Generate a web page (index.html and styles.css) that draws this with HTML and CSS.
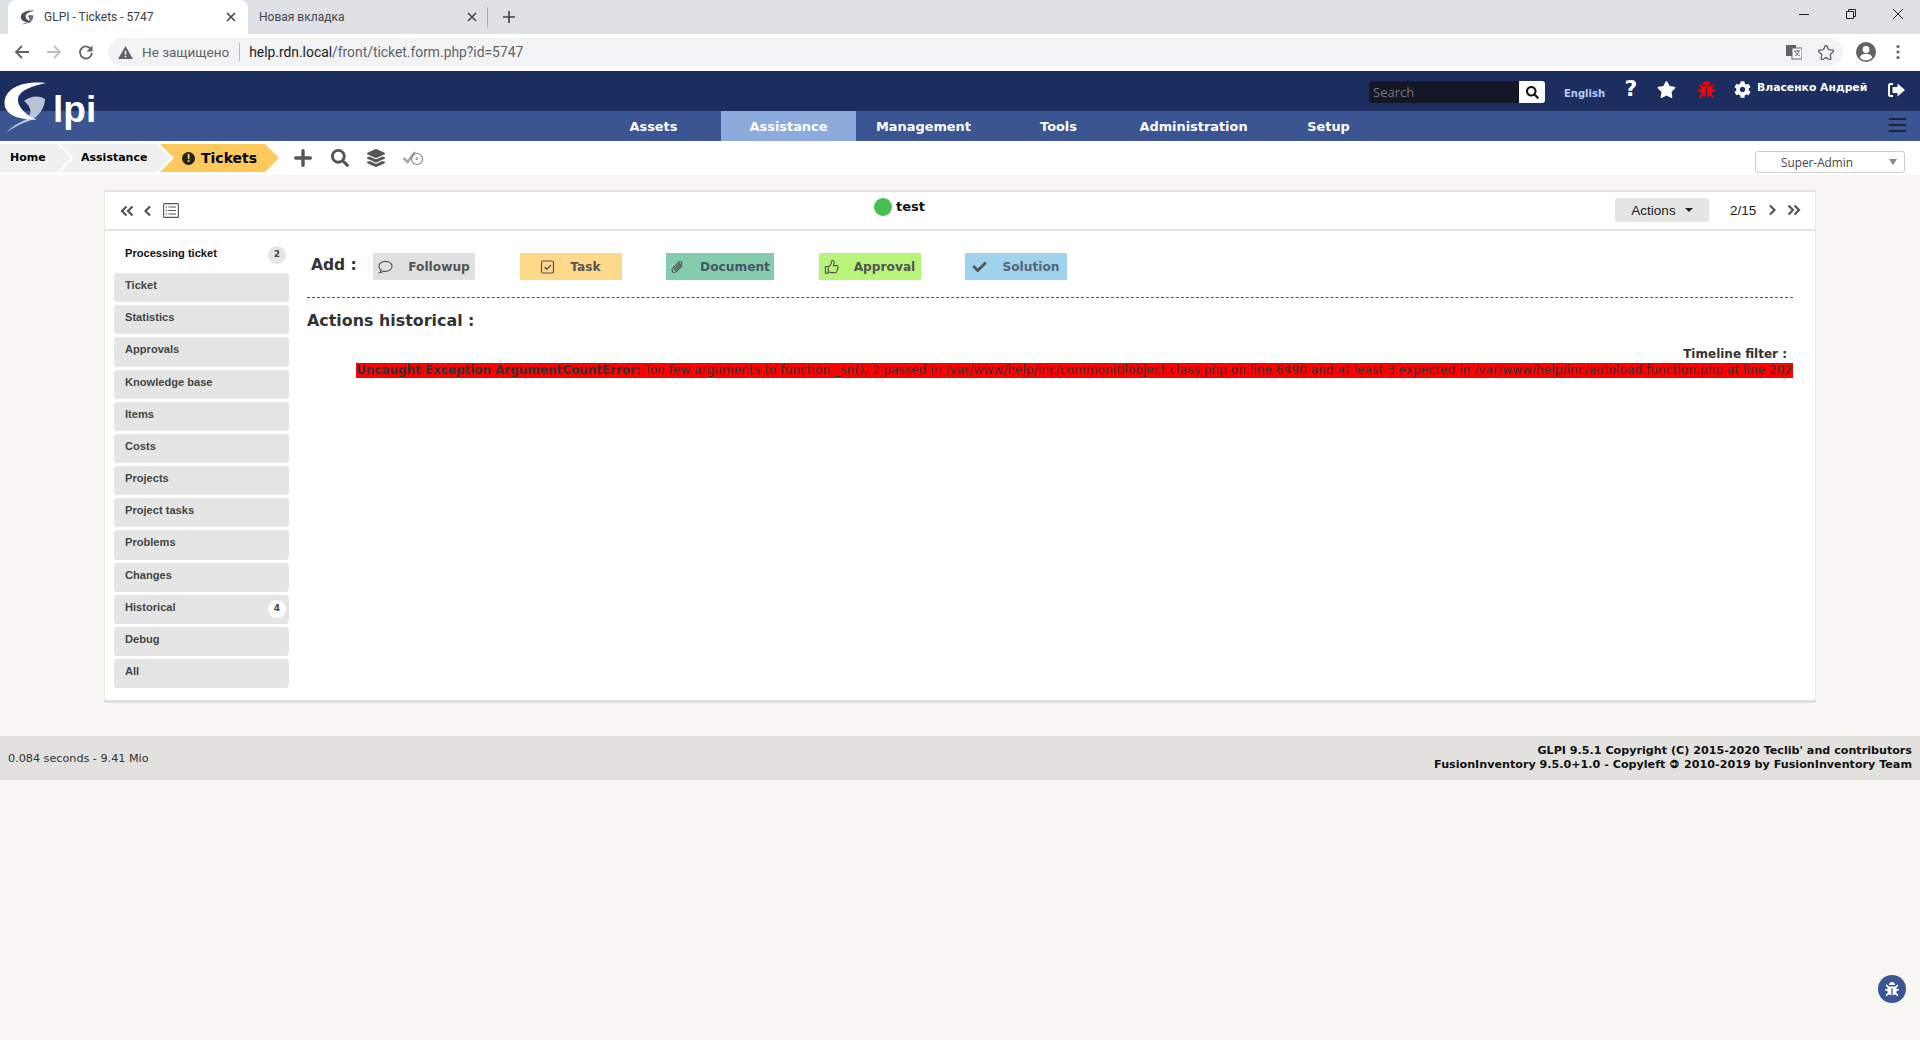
FILE: index.html
```html
<!DOCTYPE html>
<html lang="en">
<head>
<meta charset="utf-8">
<title>GLPI - Tickets - 5747</title>
<link rel="stylesheet" href="styles.css">
</head>
<body>
<svg class="defs" width="0" height="0" aria-hidden="true">
  <symbol id="i-search" viewBox="0 0 512 512"><path d="M505 442.7L405.3 343c-4.5-4.5-10.6-7-17-7H372c27.6-35.3 44-79.7 44-128C416 93.1 322.9 0 208 0S0 93.1 0 208s93.1 208 208 208c48.3 0 92.7-16.4 128-44v16.3c0 6.4 2.5 12.5 7 17l99.7 99.7c9.4 9.4 24.6 9.4 33.9 0l28.3-28.3c9.4-9.4 9.4-24.6.1-34zM208 336c-70.7 0-128-57.2-128-128 0-70.7 57.2-128 128-128 70.7 0 128 57.2 128 128 0 70.7-57.2 128-128 128z"/></symbol>
  <symbol id="i-bug" viewBox="0 0 512 512"><path d="M511.988 288.9c-.478 17.43-15.217 31.1-32.653 31.1H424v16c0 21.864-4.882 42.584-13.6 61.145l60.228 60.228c12.496 12.497 12.496 32.758 0 45.255-12.498 12.497-32.759 12.496-45.256 0l-54.736-54.736C345.886 467.965 314.351 480 280 480V236c0-6.627-5.373-12-12-12h-24c-6.627 0-12 5.373-12 12v244c-34.351 0-65.886-12.035-90.636-32.108l-54.736 54.736c-12.498 12.497-32.759 12.496-45.256 0-12.496-12.497-12.496-32.758 0-45.255l60.228-60.228C92.882 378.584 88 357.864 88 336v-16H32.666C15.23 320 .491 306.33.013 288.897-.484 270.806 14.038 256 32 256h56v-58.745l-46.628-46.628c-12.496-12.497-12.496-32.758 0-45.255 12.498-12.497 32.758-12.497 45.256 0L141.255 160h229.489l54.627-54.627c12.498-12.497 32.758-12.497 45.256 0 12.496 12.497 12.496 32.758 0 45.255L424 197.255V256h56c17.962 0 32.484 14.806 31.988 32.9zM257 0c-61.856 0-112 50.144-112 112h224C369 50.144 318.856 0 257 0z"/></symbol>
</svg>

<div class="tabstrip">
  <div class="tab tab-active">
    <svg class="favicon" viewBox="0 0 48 48"><path d="M46 2C28 0 8 4 3 18C0 30 10 37 24 39L38 40C28 35 17 28 18 18C20 10 32 5 46 2Z"/><path d="M24 19C30 15 38 15 43 18C43 28 37 38 28 41C19 44 10 46 5 47C12 42 20 40 27 38C32 33 32 26 24 19Z" opacity=".8"/></svg>
    <span class="tab-title">GLPI - Tickets - 5747</span>
    <svg class="tab-x" viewBox="0 0 10 10"><path d="M1 1l8 8M9 1l-8 8"/></svg>
  </div>
  <div class="tab">
    <span class="tab-title">Новая вкладка</span>
    <svg class="tab-x" viewBox="0 0 10 10"><path d="M1 1l8 8M9 1l-8 8"/></svg>
  </div>
  <span class="tab-sep"></span>
  <svg class="new-tab" viewBox="0 0 12 12"><path d="M6 0v12M0 6h12"/></svg>
  <div class="win-ctrls">
    <svg class="win-ico" viewBox="0 0 12 12"><path d="M1 6.5h10"/></svg>
    <svg class="win-ico" viewBox="0 0 12 12"><path d="M1.5 3.5h7v7h-7zM3.5 3.5v-2h7v7h-2"/></svg>
    <svg class="win-ico" viewBox="0 0 12 12"><path d="M1 1l10 10M11 1L1 11"/></svg>
  </div>
</div>

<div class="toolbar">
  <svg class="tb-ico" viewBox="0 0 16 16"><path d="M15 8H2M8 2L2 8l6 6"/></svg>
  <svg class="tb-ico tb-off" viewBox="0 0 16 16"><path d="M1 8h13M8 2l6 6-6 6"/></svg>
  <svg class="tb-ico" viewBox="0 0 16 16"><path d="M13.5 6A6 6 0 1 0 14 9"/><path class="tb-fill" d="M14.5 1.5v6h-6z"/></svg>
  <div class="omnibox">
    <svg class="warn" viewBox="0 0 16 14"><path d="M8 0l8 14H0z"/><path class="warn-mark" d="M7.2 5h1.6v4.5H7.2zM7.2 10.5h1.6v1.6H7.2z"/></svg>
    <span class="insecure">Не защищено</span>
    <span class="omni-sep"></span>
    <span class="url"><b>help.rdn.local</b>/front/ticket.form.php?id=5747</span>
    <svg class="translate" viewBox="0 0 16 16"><rect x="0" y="1" width="10" height="11" fill="#5f6368"/><rect x="6" y="4" width="10" height="11" fill="#fff" stroke="#5f6368"/><path d="M8 7h6M11 6v1M13 7c-1 3-2 4-4 5M9 8c1 2 3 3 5 4" fill="none" stroke="#5f6368"/></svg>
    <svg class="omni-star" viewBox="0 0 576 512"><path d="M259.3 17.8L194 150.2 47.9 171.5c-26.2 3.8-36.7 36.1-17.7 54.6l105.7 103-25 145.5c-4.5 26.3 23.2 46 46.4 33.7L288 439.6l130.7 68.7c23.2 12.2 50.9-7.4 46.4-33.7l-25-145.5 105.7-103c19-18.5 8.5-50.8-17.7-54.6L382 150.2 316.7 17.8c-11.7-23.6-45.6-23.9-57.4 0z"/></svg>
  </div>
  <svg class="avatar" viewBox="0 0 20 20"><circle cx="10" cy="10" r="10" fill="#5f6368"/><circle cx="10" cy="7.5" r="3.4" fill="#fff"/><path d="M3.6 15.2c1.5-2.5 4-3.4 6.4-3.4s4.900.9 6.400 3.400A8.200 8.200 0 0 1 3.600 15.200z" fill="#fff"/></svg>
  <svg class="kebab" viewBox="0 0 4 16"><circle cx="2" cy="2.500" r="1.600"/><circle cx="2" cy="8" r="1.600"/><circle cx="2" cy="13.500" r="1.600"/></svg>
</div>

<header class="hdr">
  <div class="logo">
    <svg class="logo-svg" viewBox="0 0 100 70">
      <path class="logo-s" d="M24 31C30 26 39 25 45 29C45 38 38 48 29 51C20 54 11 59 6 63C12 56 20 52 27 49C32 44 32 37 24 31Z"/>
      <path class="logo-g" d="M46 13C28 11 9 15 5 29C2 41 12 47 25 49L37 50C28 46 17 38 18 28C20 20 32 16 46 13Z"/>
      <text class="logo-t" x="53" y="52">lpi</text>
    </svg>
  </div>
  <div class="hdr-top">
    <div class="search"><span class="search-ph">Search</span><span class="search-btn"><svg class="search-ico" viewBox="0 0 512 512"><use href="#i-search"/></svg></span></div>
    <span class="lang">English</span>
    <span class="help">?</span>
    <svg class="h-star" viewBox="0 0 576 512"><path d="M259.3 17.8L194 150.2 47.900 171.500c-26.200 3.800-36.700 36.100-17.700 54.600l105.700 103-25 145.500c-4.500 26.300 23.200 46 46.400 33.700L288 439.600l130.700 68.700c23.200 12.200 50.900-7.400 46.400-33.700l-25-145.500 105.700-103c19-18.500 8.500-50.800-17.700-54.600L382 150.200 316.700 17.800c-11.700-23.600-45.600-23.900-57.400 0z"/></svg>
    <svg class="h-bug" viewBox="0 0 512 512"><use href="#i-bug"/></svg>
    <svg class="h-gear" viewBox="0 0 512 512"><path d="M487.4 315.7l-42.600-24.600c4.300-23.200 4.300-47 0-70.200l42.600-24.600c4.900-2.800 7.100-8.600 5.500-14-11.100-35.600-30-67.800-54.700-94.600-3.800-4.100-10-5.100-14.800-2.300L380.800 110c-17.900-15.400-38.500-27.300-60.800-35.100V25.800c0-5.600-3.900-10.500-9.400-11.700-36.700-8.200-74.300-7.800-109.200 0-5.500 1.200-9.400 6.100-9.400 11.700V75c-22.200 7.900-42.800 19.800-60.800 35.100L88.700 85.500c-4.900-2.800-11-1.900-14.800 2.300-24.700 26.700-43.600 58.900-54.700 94.600-1.700 5.400.6 11.200 5.500 14L67.300 221c-4.300 23.200-4.300 47 0 70.200l-42.600 24.600c-4.900 2.800-7.100 8.600-5.500 14 11.100 35.600 30 67.800 54.700 94.600 3.800 4.100 10 5.100 14.800 2.300l42.600-24.600c17.900 15.400 38.500 27.300 60.800 35.100v49.200c0 5.600 3.900 10.500 9.400 11.700 36.700 8.200 74.300 7.800 109.200 0 5.500-1.200 9.400-6.100 9.400-11.700v-49.200c22.200-7.900 42.800-19.800 60.800-35.100l42.600 24.600c4.900 2.800 11 1.900 14.800-2.300 24.700-26.700 43.600-58.900 54.700-94.600 1.500-5.500-.7-11.300-5.600-14.100zM256 336c-44.100 0-80-35.900-80-80s35.900-80 80-80 80 35.900 80 80-35.900 80-80 80z"/></svg>
    <span class="user">Власенко Андрей</span>
    <svg class="h-out" viewBox="0 0 18 16"><path class="out-door" d="M6 2H3.500C2.500 2 2 2.500 2 3.500v9c0 1 .5 1.500 1.500 1.500H6"/><path d="M10.500 1.500L18 8l-7.500 6.500V11H5.500V5h5z"/></svg>
  </div>
</header>

<nav class="nav">
  <a class="nav-item">Assets</a>
  <a class="nav-item nav-active">Assistance</a>
  <a class="nav-item">Management</a>
  <a class="nav-item">Tools</a>
  <a class="nav-item">Administration</a>
  <a class="nav-item">Setup</a>
  <span class="burger"><i></i><i></i><i></i></span>
</nav>

<div class="crumbs">
  <a class="crumb crumb-home">Home</a>
  <a class="crumb crumb-mid">Assistance</a>
  <a class="crumb crumb-cur"><span class="excl">!</span>Tickets</a>
  <span class="tool"><svg class="tool-ico" viewBox="0 0 16 16"><path class="plus" d="M8 1.500v13M1.500 8h13"/></svg></span>
  <span class="tool"><svg class="tool-ico" viewBox="0 0 512 512"><use href="#i-search"/></svg></span>
  <span class="tool"><svg class="tool-ico" viewBox="0 0 512 512"><path d="M12.410 148.020l232.940 105.670c6.800 3.090 14.490 3.090 21.290 0l232.940-105.670c16.550-7.510 16.550-32.520 0-40.030L266.650 2.310a25.607 25.607 0 0 0-21.290 0L12.410 107.980c-16.550 7.510-16.550 32.530 0 40.040zm487.180 88.280l-58.090-26.330-161.640 73.270c-7.560 3.430-15.590 5.170-23.860 5.170s-16.290-1.740-23.860-5.170L70.510 209.970l-58.100 26.330c-16.550 7.500-16.550 32.500 0 40l232.940 105.590c6.800 3.080 14.490 3.080 21.290 0L499.590 276.300c16.550-7.500 16.550-32.500 0-40zm0 127.800l-57.870-26.230-161.860 73.370c-7.560 3.430-15.590 5.170-23.860 5.170s-16.290-1.740-23.860-5.170L70.290 337.870 12.410 364.100c-16.550 7.500-16.550 32.500 0 40l232.940 105.590c6.800 3.080 14.490 3.080 21.290 0L499.590 404.100c16.550-7.500 16.550-32.500 0-40z"/></svg></span>
  <span class="tool"><svg class="tool-check" viewBox="0 0 22 16"><path class="tc-stroke" d="M1.500 8l4 4L13 2"/><circle class="tc-thin" cx="15" cy="9" r="5.500"/><path class="tc-thin" d="M15 7v2.500h-1.500"/></svg></span>
  <div class="profile"><span>Super-Admin</span><i class="caret"></i></div>
</div>

<main class="page">
  <section class="card-head">
    <div class="ch-left">
      <svg class="chev" viewBox="0 0 14 12"><path d="M6.500 1.500L2 6l4.500 4.500M12.500 1.500L8 6l4.500 4.500"/></svg>
      <svg class="chev-1 chev-back" viewBox="0 0 8 12"><path d="M6 1.500L1.500 6 6 10.500"/></svg>
      <svg class="list-ico" viewBox="0 0 16 15"><rect x=".6" y=".6" width="14.800" height="13.800" rx="1"/><path d="M5.500 4h7.500M5.500 7.500h7.500M5.500 11h7.500M2.500 4h1.500M2.500 7.500h1.500M2.500 11h1.500"/></svg>
    </div>
    <div class="ch-title"><span class="dot"></span><span class="title">test</span></div>
    <div class="ch-right">
      <span class="actions">Actions<i class="caret-d"></i></span>
      <span class="pager">2/15</span>
      <svg class="chev-1 chev-r" viewBox="0 0 8 12"><path d="M2 1.500L6.500 6 2 10.500"/></svg>
      <svg class="chev chev-rr" viewBox="0 0 14 12"><path d="M1.500 1.500L6 6l-4.500 4.500M7.500 1.500L12 6l-4.500 4.500"/></svg>
    </div>
  </section>

  <section class="card-body">
    <aside class="side">
      <a class="side-item side-first">Processing ticket<span class="badge badge-gray">2</span></a>
      <a class="side-item">Ticket</a>
      <a class="side-item">Statistics</a>
      <a class="side-item">Approvals</a>
      <a class="side-item">Knowledge base</a>
      <a class="side-item">Items</a>
      <a class="side-item">Costs</a>
      <a class="side-item">Projects</a>
      <a class="side-item">Project tasks</a>
      <a class="side-item">Problems</a>
      <a class="side-item">Changes</a>
      <a class="side-item">Historical<span class="badge">4</span></a>
      <a class="side-item">Debug</a>
      <a class="side-item">All</a>
    </aside>
    <div class="content">
      <div class="add-row">
        <span class="add-label">Add :</span>
        <a class="btn btn-follow"><svg class="btn-ico" viewBox="0 0 16 14"><path d="M8 1C4 1 1 3.300 1 6.300c0 1.700 1 3.200 2.500 4.100-.2 1-.8 2-1.700 2.600 1.700-.1 3.200-.8 4.200-1.600.6.1 1.300.2 2 .2 4 0 7-2.300 7-5.300S12 1 8 1z"/></svg>Followup</a>
        <a class="btn btn-task"><svg class="btn-ico" viewBox="0 0 14 14"><rect x="1" y="1" width="12" height="12" rx="1.500"/><path class="thick" d="M4 7l2.200 2.200L10.500 5"/></svg>Task</a>
        <a class="btn btn-doc"><svg class="btn-ico" viewBox="0 0 14 16"><path class="thick" d="M12.500 6.500L6 13c-1.500 1.500-3.500 1.500-4.500.5s-1-3 .5-4.500L8.500 2.500c1-1 2.300-1 3-.3s.7 2-.3 3L5.500 11c-.6.6-1.200.6-1.600.2s-.4-1 .2-1.600L10 3.700"/></svg>Document</a>
        <a class="btn btn-appr"><svg class="btn-ico" viewBox="0 0 15 15"><path d="M1 7h3v7H1zM4 7.500c2-1 3.500-3 3.500-5.500 0-1 .5-1.500 1.200-1.500 1 0 1.800 1 1.800 2.500 0 1.200-.4 2.300-.8 3h3.300c1 0 1.500.7 1.500 1.500 0 .5-.2 1-.5 1.200.3.400.3 1.300-.3 1.700.2.600 0 1.300-.6 1.600 0 .9-.7 1.500-1.600 1.500H7c-1.200 0-2-.5-3-1"/></svg>Approval</a>
        <a class="btn btn-sol"><svg class="btn-ico btn-solid" viewBox="0 0 512 512"><path d="M173.898 439.404l-166.400-166.400c-9.997-9.997-9.997-26.206 0-36.204l36.203-36.204c9.997-9.998 26.207-9.998 36.204 0L192 312.690 432.095 72.596c9.997-9.997 26.207-9.997 36.204 0l36.203 36.204c9.997 9.997 9.997 26.206 0 36.204l-294.400 294.401c-9.998 9.997-26.207 9.997-36.204-.001z"/></svg>Solution</a>
      </div>
      <h2 class="hist">Actions historical :</h2>
      <div class="filter">Timeline filter :</div>
      <div class="err"><b class="err-b">Uncaught Exception ArgumentCountError:</b> <span class="err-t">Too few arguments to function _sn(), 2 passed in /var/www/help/inc/commonitilobject.class.php on line 6490 and at least 3 expected in /var/www/help/inc/autoload.function.php at line 202</span></div>
    </div>
  </section>
</main>

<footer class="foot">
  <span class="foot-l">0.084 seconds - 9.41 Mio</span>
  <div class="foot-r">
    <div>GLPI 9.5.1 Copyright (C) 2015-2020 Teclib' and contributors</div>
    <div>FusionInventory 9.5.0+1.0 - Copyleft <span class="copyleft">🄯</span> 2010-2019 by FusionInventory Team</div>
  </div>
</footer>

<a class="debug-fab"><svg class="fab-ico" viewBox="0 0 512 512"><use href="#i-bug"/></svg></a>
</body>
</html>
```
FILE: styles.css
```css
* { box-sizing: border-box; }
html, body { margin: 0; padding: 0; }
body {
  height: 1040px;
  overflow: hidden;
  background: #f7f6f2;
  font-family: "DejaVu Sans", Verdana, sans-serif;
  font-size: 12px;
  color: #333;
  position: relative;
}
.defs { position: absolute; }
a { color: inherit; text-decoration: none; }

/* browser chrome */
.tabstrip { height: 34px; background: #dee1e6; display: flex; align-items: flex-start; padding: 0 0 0 8px; font-family: Roboto, "Liberation Sans", sans-serif; font-size: 12px; }
.tab { width: 240px; height: 34px; display: flex; align-items: center; padding: 0 12px 0 12px; color: #45474a; }
.tab-active { background: #fff; border-radius: 8px 8px 0 0; color: #3c4043; }
.tab + .tab { padding-left: 11px; padding-right: 10px; width: 239px; }
.favicon { width: 15px; height: 15px; margin-right: 9px; fill: #4b4f55; flex: none; }
.tab-title { flex: 1; }
.tab-x { width: 10px; height: 10px; fill: none; stroke: #45474a; stroke-width: 1.600; flex: none; }
.tab-sep { width: 1px; height: 20px; background: #a5a8ad; margin-top: 7px; margin-left: 0; }
.new-tab { width: 12px; height: 12px; margin: 11px 0 0 15px; fill: none; stroke: #3c4043; stroke-width: 1.600; }
.win-ctrls { margin-left: auto; display: flex; gap: 35px; padding: 8px 16px 0 0; }
.win-ico { width: 12px; height: 12px; fill: none; stroke: #222; stroke-width: 1; }
.toolbar { height: 37px; background: #fff; display: flex; align-items: center; padding: 0 9px 1px 14px; }
.tb-ico { width: 16px; height: 16px; fill: none; stroke: #5f6368; stroke-width: 1.800; margin-right: 16px; flex: none; }
.tb-off { stroke: #bcbfc4; }
.tb-fill { fill: #5f6368; stroke: none; }
.omnibox { flex: none; width: 1735px; height: 28px; margin-left: -2px; border-radius: 14px; background: #f1f3f4; display: flex; align-items: center; padding: 0 0 0 10px; font-family: Roboto, "Liberation Sans", sans-serif; font-size: 14px; color: #5f6368; }
.warn { width: 15px; height: 13px; fill: #5f6368; flex: none; margin-right: 9px; }
.warn-mark { fill: #f1f3f4; }
.insecure { font-size: 13.500px; }
.omni-sep { width: 1px; height: 18px; background: #b5b7ba; margin: 0 9px 0 10px; }
.url { font-size: 13.850px; flex: 1; }
.url b { font-weight: 400; color: #202124; }
.translate { width: 16px; height: 16px; margin-right: 16px; flex: none; }
.omni-star { width: 16px; height: 15px; margin-right: 9px; fill: none; stroke: #5f6368; stroke-width: 48; flex: none; }
.avatar { width: 20px; height: 20px; margin-left: 13px; flex: none; }
.kebab { width: 4px; height: 16px; margin-left: 20px; fill: #5f6368; flex: none; }

/* GLPI header */
.hdr { height: 40px; background: #1c2d5f; position: relative; }
.logo { position: absolute; left: 0; top: -1px; width: 100px; height: 70px; z-index: 2; }
.logo-svg { width: 100px; height: 70px; display: block; }
.logo-g { fill: #fff; }
.logo-s { fill: #b9c3d8; }
.logo-t { font-family: "Liberation Sans", Arial, sans-serif; font-size: 37px; font-weight: 700; fill: #fff; }
.hdr-top { height: 40px; display: flex; align-items: flex-start; padding-left: 1369px; color: #fff; }
.search { width: 176px; height: 22px; margin-top: 10px; background: #151628; border-radius: 3px; display: flex; flex: none; overflow: hidden; }
.search-ph { flex: 1; padding-left: 4px; line-height: 22px; font-family: "Open Sans", sans-serif; font-size: 13px; color: #777; }
.search-btn { width: 26px; background: #fff; display: flex; align-items: center; justify-content: center; }
.search-ico { width: 13px; height: 13px; fill: #111; }
.lang { margin: 16px 0 0 19px; font-weight: 700; font-size: 10px; line-height: 13px; color: #b5cdf0; width: 41px; white-space: nowrap; }
.help { margin: 5px 0 0 19px; font-weight: 700; line-height: 26px; width: 14px; text-align: center; font-size: 22px; }
.h-star { width: 19px; height: 17px; margin: 10px 0 0 19px; fill: #fff; }
.h-bug { width: 17px; height: 17px; margin: 10px 0 0 22px; fill: #f00; }
.h-gear { width: 17px; height: 17px; margin: 10px 0 0 19px; fill: #fff; }
.user { margin: 10px 0 0 6px; font-weight: 700; font-size: 10.800px; line-height: 14px; width: 112px; white-space: nowrap; }
.h-out { width: 18px; height: 16px; margin: 11px 0 0 18px; fill: #fff; }
.out-door { fill: none; stroke: #fff; stroke-width: 2; }

.nav { height: 30px; background: #3a5592; display: flex; padding-left: 586px; position: relative; }
.nav-item { width: 135px; line-height: 31px; text-align: center; color: #fff; font-weight: 700; font-size: 12.900px; }
.nav-active { background: #8caadb; }
.burger { margin-left: auto; margin-right: 14px; width: 17px; height: 14px; margin-top: 7px; display: flex; flex-direction: column; justify-content: space-between; }
.burger i { height: 2px; background: #1c2538; display: block; }

.crumbs { height: 34px; background: #fff; display: flex; align-items: flex-start; padding-top: 3px; position: relative; }
.crumb { height: 28px; line-height: 27px; font-weight: 700; font-size: 11px; color: #000; background: #f0f0f0; flex: none; }
.crumb-home { width: 71px; padding-left: 10px; clip-path: polygon(0 0, 57px 0, 71px 14px, 57px 28px, 0 28px); }
.crumb-mid { width: 111px; margin-left: -11px; padding-left: 21px; clip-path: polygon(0 0, 97px 0, 111px 14px, 97px 28px, 0 28px, 14px 14px); }
.crumb-cur { width: 119px; margin-left: -11px; padding-left: 22px; background: #fec95c; font-size: 14px; font-weight: 700; display: flex; align-items: center; clip-path: polygon(0 0, 105px 0, 119px 14px, 105px 28px, 0 28px, 14px 14px); }
.excl { width: 13px; height: 13px; border-radius: 50%; background: #222; color: #fec95c; font-size: 10px; line-height: 13px; text-align: center; margin-right: 6px; flex: none; }
.tool { width: 36.700px; height: 27px; display: flex; align-items: center; justify-content: center; flex: none; }
.tool:first-of-type { margin-left: 5.500px; }
.tool-ico { width: 18px; height: 18px; fill: #555; }
.plus { fill: none; stroke: #555; stroke-width: 3; stroke-linecap: round; }
.tool-check { width: 22px; height: 16px; fill: none; }
.tc-stroke { stroke: #aaa; stroke-width: 2.600; }
.tc-thin { stroke: #888; stroke-width: 1.200; fill: none; }
.profile { position: absolute; right: 15px; top: 10px; width: 150px; height: 22px; border: 1px solid #ccc; border-radius: 3px; display: flex; align-items: center; padding-left: 25px; font-family: "Open Sans", sans-serif; font-size: 11.800px; color: #444; }
.caret { width: 0; height: 0; margin-left: auto; margin-right: 7px; border: 4px solid transparent; border-top: 6px solid #888; border-bottom: 0; }

/* card */
.page { margin: 15px 104px 0 104px; }
.card-head { height: 41px; background: #fff; border: 1px solid #eaeaea; border-top: 2px solid #e3e3e3; border-bottom: 2px solid #e3e3e3; display: flex; align-items: flex-start; }
.ch-left { flex: 0 0 769px; display: flex; align-items: center; height: 37px; padding-left: 15px; }
.chev { width: 14px; height: 12px; fill: none; stroke: #555; stroke-width: 2.200; flex: none; }
.chev-1 { width: 8px; height: 12px; fill: none; stroke: #555; stroke-width: 2.200; flex: none; }
.chev-back { margin-left: 10px; }
.list-ico { width: 16px; height: 15px; fill: none; stroke: #555; stroke-width: 1.100; margin-left: 11px; }
.ch-title { display: flex; align-items: center; gap: 4px; padding-top: 6px; }
.dot { width: 18px; height: 18px; border-radius: 50%; background: #46bf51; }
.title { font-weight: 700; font-size: 13px; color: #111; margin-top: -2px; }
.ch-right { margin-left: auto; display: flex; align-items: center; padding: 6px 14px 0 0; }
.actions { width: 94px; height: 24px; border-radius: 3px; background: #e5e5e5; display: flex; align-items: center; justify-content: center; font-family: "Liberation Sans", sans-serif; font-size: 13.500px; color: #222; }
.caret-d { width: 0; height: 0; margin-left: 9px; border: 4px solid transparent; border-top: 4px solid #222; border-bottom: 0; }
.pager { margin-left: 21px; width: 28px; white-space: nowrap; font-family: "Liberation Sans", sans-serif; font-size: 13.500px; color: #222; }
.chev-r { margin-left: 10px; }
.chev-rr { margin-left: 11px; }

.card-body { height: 469px; background: #fff; border: 1px solid #eaeaea; border-top: 0; border-bottom: 0; display: flex; box-shadow: 0 3px 0 #dedede; border-radius: 0 0 2px 2px; }
.side { width: 175px; margin-left: 9px; padding-top: 10px; display: flex; flex-direction: column; gap: 3px; flex: none; }
.side-item { height: 29.170px; line-height: 24px; background: #e5e5e5; border-radius: 3px; padding-left: 11px; font-family: "Liberation Sans", Arial, sans-serif; font-size: 11.100px; font-weight: 700; color: #444; position: relative; display: block; }
.side-first { background: #fff; color: #111; }
.badge { position: absolute; right: 3px; top: 5px; width: 18px; height: 18px; border-radius: 50%; background: #fff; font-size: 9px; line-height: 16px; text-align: center; color: #444; font-family: "DejaVu Sans", sans-serif; }
.badge-gray { background: #e5e5e5; }
.content { width: 1486px; margin-left: 18px; padding-top: 22px; flex: none; }
.add-row { display: flex; align-items: flex-start; gap: 44.500px; padding-bottom: 17px; border-bottom: 1px dashed #555; height: 45px; }
.add-label { font-weight: 700; font-size: 15.500px; color: #333; margin-left: 4px; line-height: 24px; width: 46px; white-space: nowrap; margin-right: -28.500px; }
.btn { height: 27px; display: flex; align-items: center; justify-content: center; gap: 15px; font-weight: 700; font-size: 12.200px; color: #555; flex: none; width: 102px; }
.btn-ico { width: 15px; height: 14px; fill: none; stroke: #555; stroke-width: 1.200; flex: none; }
.thick { stroke-width: 1.400; }
.btn-solid { fill: #555; stroke: none; }
.btn-follow { background: #e0e0e0; }
.btn-task { background: #fed98c; }
.btn-doc { background: #84cdac; width: 108px; color: #456; }
.btn-appr { background: #b8f47a; }
.btn-sol { background: #a0d2ed; color: #567; }
.hist { margin: 12px 0 0; font-weight: 700; font-size: 15.900px; line-height: 22px; color: #333; }
.filter { margin-top: 14px; padding-right: 6px; text-align: right; font-weight: 700; font-size: 12px; line-height: 17px; color: #333; }
.err { margin-left: 49px; height: 15px; line-height: 15px; background: #f00; white-space: nowrap; overflow: hidden; font-size: 12px; color: #333; }
.err-b { letter-spacing: -.03px; }
.err-t { letter-spacing: .105px; }

/* footer */
.foot { height: 44px; margin-top: 36px; background: #e2e1dd; display: flex; align-items: center; justify-content: space-between; padding: 0 8px; color: #111; }
.foot-l { font-size: 11.200px; color: #333; }
.foot-r { text-align: right; font-weight: 700; font-size: 11.150px; line-height: 14px; font-family: "DejaVu Sans", "Noto Sans", sans-serif; }
.copyleft { margin: 0 1px; }
.debug-fab { position: absolute; left: 1878px; top: 975px; width: 28px; height: 28px; border-radius: 50%; background: #3a5592; display: flex; align-items: center; justify-content: center; }
.fab-ico { width: 14px; height: 14px; fill: #fff; }
```
